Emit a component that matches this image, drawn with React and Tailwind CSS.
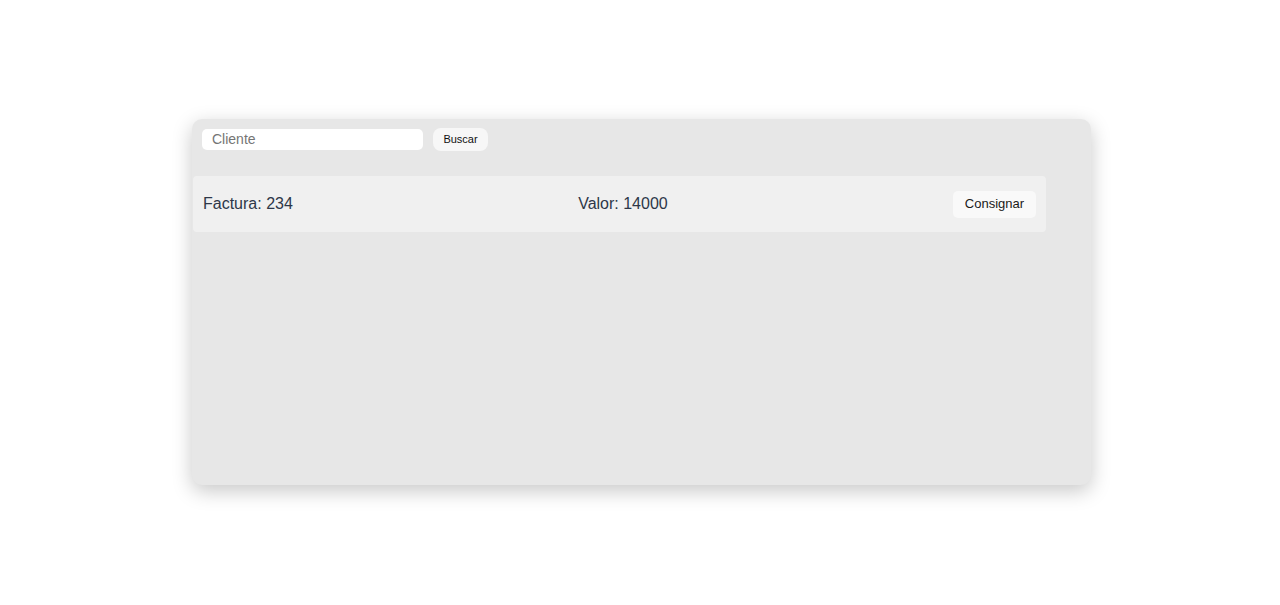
import React, { useState } from 'react';

const FACTURAS = [{ id: 234, valor: 14000 }];

export default function App() {
  const [cliente, setCliente] = useState('');

  return (
    <div className="w-full h-[605px] bg-white pt-[119px] pl-[192px] font-['Liberation_Sans',Arial,sans-serif]">
      <div className="w-[899px] h-[366px] bg-[#e7e7e7] rounded-[10px] shadow-[0_6px_20px_rgba(0,0,0,0.22)] p-[10px] pl-0 flex flex-col">
        {/* Search bar */}
        <div className="flex items-center gap-[10px] pl-[10px] h-[21px]">
          <input
            value={cliente}
            onChange={(e) => setCliente(e.target.value)}
            placeholder="Cliente"
            className="w-[221px] h-[21px] bg-white rounded-[5px] px-[10px] text-[14px] text-[#333] placeholder:text-[#757575] outline-none"
          />
          <button className="h-[23px] w-[55px] bg-[#f7f7f7] rounded-[8px] text-[11px] text-[#111]">
            Buscar
          </button>
        </div>

        {/* Facturas */}
        <div className="mt-[26px] flex flex-col gap-2">
          {FACTURAS.map((f) => (
            <div
              key={f.id}
              className="w-[853px] h-[56px] ml-[1px] bg-[#f0f0f0] rounded-[4px] px-[10px] flex items-center justify-between text-[16px] text-[#2d3748]"
            >
              <span>Factura: {f.id}</span>
              <span>Valor: {f.valor}</span>
              <button className="h-[27px] w-[83px] bg-[#f9f9f9] rounded-[5px] text-[13px] text-[#1a1a1a]">
                Consignar
              </button>
            </div>
          ))}
        </div>
      </div>
    </div>
  );
}
